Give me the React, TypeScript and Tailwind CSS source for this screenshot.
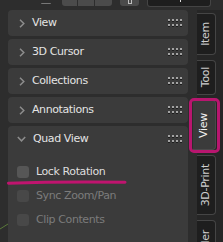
import React from "react";

const font = { fontFamily: '"DejaVu Sans", "Liberation Sans", sans-serif' };

function Grip() {
  const xs = [0, 4, 8, 12];
  const ys = [0, 5];
  return (
    <svg width="14" height="8" viewBox="0 0 14 8" className="block">
      {ys.map((y) =>
        xs.map((x) => (
          <g key={`${x}-${y}`}>
            <rect x={x} y={y + 1} width="2" height="2" fill="#1c1c1c" />
            <rect x={x} y={y} width="2" height="2" fill="#a3a3a3" />
          </g>
        ))
      )}
    </svg>
  );
}

function ChevronRight() {
  return (
    <svg width="6" height="9" viewBox="0 0 6 9" className="block">
      <path d="M1 0.8 L4.8 4.5 L1 8.2" fill="none" stroke="#8d8d8d" strokeWidth="1.5" />
    </svg>
  );
}

function ChevronDown() {
  return (
    <svg width="9" height="6" viewBox="0 0 9 6" className="block">
      <path d="M0.8 1 L4.5 4.8 L8.2 1" fill="none" stroke="#8d8d8d" strokeWidth="1.5" />
    </svg>
  );
}

function PanelHeader({ title, open }: { title: string; open?: boolean }) {
  return (
    <div className="flex h-[26px] items-center pr-[6px]">
      <div className={open ? "flex w-[24px] justify-start pl-[9px]" : "flex w-[24px] justify-start pl-[11px]"}>
        {open ? <ChevronDown /> : <ChevronRight />}
      </div>
      <span className="flex-1 text-[11px] tracking-[-0.4px] text-[#e4e4e4]">{title}</span>
      {!open && <Grip />}
    </div>
  );
}

function CheckRow({ label, active }: { label: string; active?: boolean }) {
  return (
    <div className="flex h-[24px] items-center pl-[9px]">
      <div
        className={
          active
            ? "h-[12px] w-[12px] rounded-[3px] bg-[#565656]"
            : "h-[12px] w-[12px] rounded-[3px] bg-[#484848]"
        }
      />
      <span
        className={
          active
            ? "ml-[7px] text-[11px] tracking-[-0.4px] text-[#dedede]"
            : "ml-[7px] text-[11px] tracking-[-0.4px] text-[#7c7c7c]"
        }
      >
        {label}
      </span>
    </div>
  );
}

function Tab({ label, h, active, last }: { label: string; h: number; active?: boolean; last?: boolean }) {
  const cls = active
    ? "flex w-[23px] -ml-[4px] items-center justify-center rounded-r-[4px] bg-[#3b3b3b] border border-l-0 border-[#4a4a4a]"
    : "flex w-[19px] items-center justify-center rounded-r-[4px] bg-[#1e1e1e] border border-l-0 border-[#454545]";
  return (
    <div className={cls} style={{ height: h }}>
      <span
        className={
          active
            ? "rotate-180 whitespace-nowrap text-[11px] tracking-[-0.3px] text-[#f0f0f0] [writing-mode:vertical-rl]"
            : "rotate-180 whitespace-nowrap text-[11px] tracking-[-0.3px] text-[#cfcfcf] [writing-mode:vertical-rl]"
        }
      >
        {label}
      </span>
      {last ? null : null}
    </div>
  );
}

export default function App() {
  return (
    <div className="relative h-[242px] w-[223px] overflow-hidden bg-[#2d2d2d]" style={font}>
      {/* viewport header widgets, cut off at the top */}
      <div className="flex h-[10px] items-start">
        <div className="ml-[41px] mt-[0px] h-[4px] w-[10px] rounded-b-[1px] border-b border-[#777]" />
        <div className="ml-[11px] flex h-[6px] w-[50px] overflow-hidden rounded-b-[3px] bg-[#4b4b4b]">
          <div className="h-full w-[16px] border-r border-[#2d2d2d]" />
          <div className="h-full w-[17px] border-r border-[#2d2d2d]" />
          <div className="h-full flex-1" />
        </div>
        <div className="ml-[8px] flex h-[6px] w-[19px] justify-center rounded-b-[3px] bg-[#4b4b4b]">
          <div className="h-[4px] w-[4px] border-x border-b border-[#bdbdbd]" />
        </div>
        <div className="ml-[8px] flex h-[7px] w-[64px] justify-center rounded-b-[3px] border-x border-b border-[#444] bg-[#1e1e1e]">
          <div className="ml-[2px] h-[2px] w-[1px] bg-[#ddd]" />
        </div>
      </div>

      <div className="flex">
        {/* panels */}
        <div className="flex w-[197px] flex-col gap-[3px] pl-[8px] pr-[9px]">
          <div className="rounded-[4px] bg-[#3b3b3b]">
            <PanelHeader title="View" />
          </div>
          <div className="rounded-[4px] bg-[#3b3b3b]">
            <PanelHeader title="3D Cursor" />
          </div>
          <div className="rounded-[4px] bg-[#3b3b3b]">
            <PanelHeader title="Collections" />
          </div>
          <div className="rounded-[4px] bg-[#3b3b3b]">
            <PanelHeader title="Annotations" />
          </div>
          <div className="h-[120px] rounded-t-[4px] bg-[#3b3b3b]">
            <div className="flex h-[26px] items-center pr-[6px]">
              <div className="flex w-[25px] pl-[9px]">
                <ChevronDown />
              </div>
              <span className="flex-1 text-[11px] tracking-[-0.4px] text-[#e4e4e4]">Quad View</span>
              <Grip />
            </div>
            <div className="pt-[8px]">
              <CheckRow label="Lock Rotation" active />
              <CheckRow label="Sync Zoom/Pan" />
              <CheckRow label="Clip Contents" />
            </div>
          </div>
        </div>

        {/* tab strip */}
        <div className="flex w-[26px] flex-col gap-[5px] bg-[#262626] pt-[3px]">
          <Tab label="Item" h={42} />
          <Tab label="Tool" h={35} />
          <Tab label="View" h={50} active />
          <Tab label="3D-Print" h={60} />
          <Tab label="Render" h={58} last />
        </div>
      </div>

      {/* viewport grid line showing through at the bottom left */}
      <svg className="absolute left-0 top-[220px]" width="8" height="12" viewBox="0 0 8 12">
        <path d="M0 9 L8 4" stroke="#5a7a3a" strokeWidth="1" />
      </svg>

      {/* magenta annotation: box around the View tab */}
      <div className="absolute left-[189px] top-[98px] h-[55px] w-[31px] rounded-[5px] border-[3px] border-[#b8166f]" />

      {/* magenta annotation: underline */}
      <svg className="absolute left-[7px] top-[179px]" width="120" height="7" viewBox="0 0 120 7">
        <path
          d="M1.5 4.2 C 30 3.2, 70 2.6, 118 3.2"
          fill="none"
          stroke="#c0146f"
          strokeWidth="3"
          strokeLinecap="round"
        />
      </svg>
    </div>
  );
}
